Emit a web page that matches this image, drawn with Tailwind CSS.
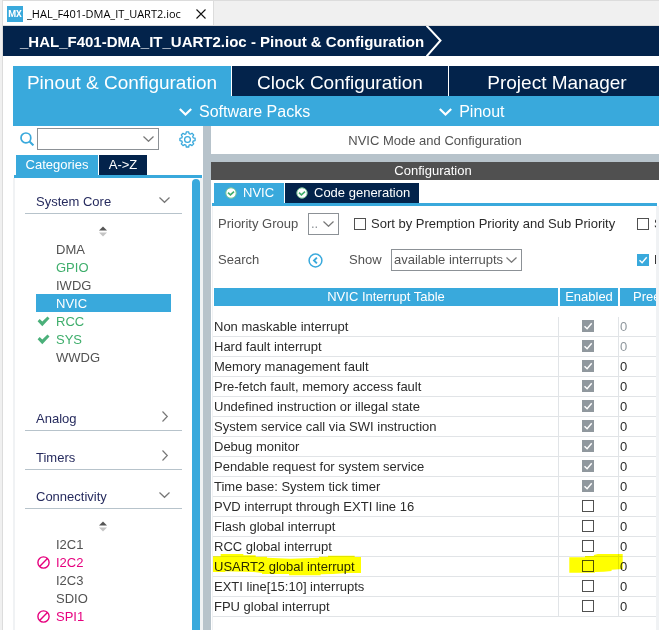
<!DOCTYPE html>
<html lang="en">
<head>
    <meta charset="UTF-8">
    <meta name="viewport" content="width=device-width, initial-scale=1.0">
    <title>_HAL_F401-DMA_IT_UART2.ioc</title>
    <script src="https://cdn.jsdelivr.net/npm/@tailwindcss/browser@4"></script>
</head>
<body class="flex h-screen flex-col overflow-hidden border-l-2 border-[#f0f0f0] bg-white font-['Liberation_Sans',Arial,sans-serif] text-[13px] leading-[18px] text-[#525252]">

    <!-- EDITOR TAB -->
    <div class="flex h-[26px] shrink-0 border-t border-b border-[#dcdcdc] bg-[#f0f0f0]">
        <div class="flex w-[212px] items-center border-x border-[#dcdcdc] bg-white pl-1 pt-px text-[11px] text-black">
            <span class="flex size-4 shrink-0 items-center justify-center bg-[#39a9dc] font-['Roboto',sans-serif] text-[9px] font-bold text-white">MX</span>
            <span class="ml-1 flex-1 whitespace-nowrap font-['Open_Sans','Noto_Sans',sans-serif]">_HAL_F401-DMA_IT_UART2.ioc</span>
            <button aria-label="Close" class="mr-[7px]">
                <svg class="size-[10px]" viewBox="0 0 10 10" fill="none" stroke="#111" stroke-width="1.1"><path d="M.5 .5l9 9M9.5 .5l-9 9"/></svg>
            </button>
        </div>
    </div>

    <div class="flex min-h-0 flex-1 flex-col border-l border-[#dcdcdc]">
        <!-- BREADCRUMB -->
        <div class="flex h-[30px] shrink-0 items-center bg-[#03234b] pl-[17px] text-[15px] font-bold text-white">
            <h1 class="whitespace-nowrap pt-px">_HAL_F401-DMA_IT_UART2.ioc - Pinout &amp; Configuration</h1>
            <svg class="ml-[2px] h-[30px] w-4" viewBox="0 0 16 30" fill="none" stroke="#fff" stroke-width="2"><path d="M0 -1L14.500 14.500L0 31"/></svg>
        </div>

        <div class="mt-[10px] flex min-h-0 flex-1 flex-col pl-[10px]">
            <!-- MAIN TABS -->
            <nav class="flex h-[30px] shrink-0 gap-px overflow-hidden text-[19px] text-white">
                <button class="w-[218px] shrink-0 whitespace-nowrap bg-[#39a9dc] pt-1">Pinout &amp; Configuration</button>
                <button class="w-[216px] shrink-0 whitespace-nowrap bg-[#03234b] pt-1">Clock Configuration</button>
                <button class="min-w-[216px] flex-1 whitespace-nowrap bg-[#03234b] pt-1">Project Manager</button>
            </nav>
            <div class="flex h-[30px] shrink-0 items-center gap-[129px] bg-[#39a9dc] pl-[166px] text-[16px] text-white">
                <button class="flex items-center gap-[7px] whitespace-nowrap pt-[2px]">
                    <svg class="h-2 w-[13px]" viewBox="0 0 13 8" fill="none" stroke="#fff" stroke-width="2.200"><path d="M.8 1L6.500 6.500L12.200 1"/></svg>
                    Software Packs
                </button>
                <button class="flex items-center gap-[7px] whitespace-nowrap pt-[2px]">
                    <svg class="h-2 w-[13px]" viewBox="0 0 13 8" fill="none" stroke="#fff" stroke-width="2.200"><path d="M.8 1L6.500 6.500L12.200 1"/></svg>
                    Pinout
                </button>
            </div>

            <div class="flex min-h-0 flex-1">
                <!-- LEFT: peripherals -->
                <aside class="flex w-[190px] shrink-0 flex-col">
                    <div class="mt-[2px] flex h-[22px] shrink-0 items-center pl-[7px] pr-[7px]">
                        <svg class="size-[14px]" viewBox="0 0 14 14" fill="none" stroke="#39a9dc" stroke-width="1.700"><circle cx="5.900" cy="5.900" r="4.900"/><path d="M9.500 9.500L13.400 13.400" stroke-width="2"/></svg>
                        <label class="relative ml-[3px]">
                            <select aria-label="Search peripheral" class="h-[22px] w-[122px] appearance-none border border-[#8c9196] bg-white"></select>
                            <svg class="pointer-events-none absolute right-[5px] top-2 h-[6px] w-[11px]" viewBox="0 0 11 6" fill="none" stroke="#777" stroke-width="1.200"><path d="M.5 .5L5.500 5.300L10.500 .5"/></svg>
                        </label>
                        <button aria-label="Settings" class="ml-auto">
                            <svg class="size-[17px]" viewBox="0 0 17 17" fill="none" stroke="#39a9dc" stroke-width="1.300" stroke-linejoin="round"><path d="M7.300 .8h2.400l.4 1.900 1.300.5 1.600-1 1.700 1.700-1 1.600.5 1.300 1.900.4v2.400l-1.900.4-.5 1.300 1 1.600-1.700 1.700-1.600-1-1.300.5-.4 1.900H7.300l-.4-1.900-1.300-.5-1.600 1-1.700-1.700 1-1.600-.5-1.300-1.900-.4V7.300l1.900-.4.5-1.300-1-1.600L4 2.300l1.600 1 1.300-.5z"/><circle cx="8.500" cy="8.500" r="2.900"/></svg>
                        </button>
                    </div>
                    <div class="mt-[5px] flex h-5 shrink-0 gap-px pl-[3px] text-white">
                        <button class="w-[82px] bg-[#39a9dc]">Categories</button>
                        <button class="w-12 bg-[#03234b]">A-&gt;Z</button>
                    </div>
                    <div class="ml-px mr-px h-[3px] shrink-0 bg-[#39a9dc]"></div>
                    <div class="flex min-h-0 flex-1 border-l-2 border-[#f0f2f4]">
                        <div id="tree" class="flex min-w-0 flex-1 flex-col gap-[3px] overflow-hidden pl-[10px] pr-[10px]"></div>
                        <div class="mt-px w-2 rounded-t-sm bg-[#39a9dc]"></div>
                        <div class="w-[3px] bg-[#f0f2f4]"></div>
                    </div>
                </aside>

                <div class="w-2 shrink-0 bg-[#b7c3cb]"></div>

                <!-- RIGHT: configuration -->
                <main class="flex min-w-0 flex-1 flex-col">
                    <h2 class="h-7 shrink-0 pt-[6px] text-center">NVIC Mode and Configuration</h2>
                    <div class="h-2 shrink-0 bg-[#b7c3cb]"></div>
                    <h3 class="h-[18px] shrink-0 bg-[#505050] pr-1 text-center text-white">Configuration</h3>
                    <div class="mt-[3px] flex h-5 shrink-0 gap-px pl-[3px] text-white">
                        <button class="flex w-[70px] items-center gap-[6px] bg-[#39a9dc] pl-[11px]">
                            <svg class="size-3" viewBox="0 0 12 12" fill="none"><circle cx="6" cy="6" r="5.200" fill="#fff" stroke="#7cc79a" stroke-width="1"/><path d="M3 5.600l2.400 2.300 3.600-3.300" stroke="#3fae6c" stroke-width="1.600"/></svg>
                            NVIC
                        </button>
                        <button class="flex w-[134px] items-center gap-[6px] whitespace-nowrap bg-[#03234b] pl-[11px]">
                            <svg class="size-3" viewBox="0 0 12 12" fill="none"><circle cx="6" cy="6" r="5.200" fill="#fff" stroke="#7cc79a" stroke-width="1"/><path d="M3 5.600l2.400 2.300 3.600-3.300" stroke="#3fae6c" stroke-width="1.600"/></svg>
                            Code generation
                        </button>
                    </div>
                    <div class="ml-px mr-[2px] h-[3px] shrink-0 bg-[#39a9dc]"></div>

                    <div class="ml-px flex min-h-0 flex-1 flex-col overflow-hidden border-l border-r-3 border-[#f0f2f4]">
                        <div class="mt-[7px] flex h-[22px] shrink-0 items-center overflow-hidden whitespace-nowrap pl-[5px]">
                            <label for="group" class="w-[90px] shrink-0">Priority Group</label>
                            <div class="relative shrink-0">
                                <select id="group" class="h-[22px] w-[31px] appearance-none border border-[#8c9196] bg-white pl-[2px] text-[#8c9196]"><option>..</option></select>
                                <svg class="pointer-events-none absolute right-[5px] top-2 h-[6px] w-[11px]" viewBox="0 0 11 6" fill="none" stroke="#777" stroke-width="1.200"><path d="M.5 .5L5.500 5.300L10.500 .5"/></svg>
                            </div>
                            <label class="ml-[15px] flex w-[283px] shrink-0 items-center gap-[5px] text-[#2b2b2b]">
                                <input type="checkbox" class="size-3 appearance-none border border-[#505050]">
                                Sort by Premption Priority and Sub Priority
                            </label>
                            <label class="flex shrink-0 items-center gap-[5px] text-[#2b2b2b]">
                                <input type="checkbox" class="size-3 appearance-none border border-[#505050]">
                                S
                            </label>
                        </div>
                        <div class="mt-[14px] flex h-[22px] shrink-0 items-center overflow-hidden whitespace-nowrap pl-[5px]">
                            <span class="w-[90px] shrink-0">Search</span>
                            <button aria-label="Previous" class="mr-[26px] shrink-0">
                                <svg class="size-[15px]" viewBox="0 0 15 15" fill="none" stroke="#39a9dc"><circle cx="7.500" cy="7.500" r="6.400" stroke-width="1.500"/><path d="M8.900 4.600L6 7.500l2.900 2.900" stroke-width="1.900"/></svg>
                            </button>
                            <label for="show" class="w-[42px] shrink-0">Show</label>
                            <div class="relative w-[246px] shrink-0">
                                <select id="show" class="h-[22px] w-[131px] appearance-none border border-[#8c9196] bg-white pl-[2px]"><option>available interrupts</option></select>
                                <svg class="pointer-events-none absolute left-[115px] top-2 h-[6px] w-[11px]" viewBox="0 0 11 6" fill="none" stroke="#777" stroke-width="1.200"><path d="M.5 .5L5.500 5.300L10.500 .5"/></svg>
                            </div>
                            <label class="flex shrink-0 items-center gap-[5px] text-[#2b2b2b]">
                                <span class="grid">
                                    <input type="checkbox" checked class="col-start-1 row-start-1 size-3 appearance-none bg-[#39a9dc]">
                                    <svg class="pointer-events-none col-start-1 row-start-1 size-3" viewBox="0 0 12 12" fill="none" stroke="#fff" stroke-width="1.400"><path d="M2.500 6.200l2.600 2.500 4.600-5.500"/></svg>
                                </span>
                                F
                            </label>
                        </div>

                        <table class="mt-[17px] w-full table-fixed border-separate border-spacing-0 text-[#2b2b2b]">
                            <colgroup>
                                <col>
                                <col class="w-[60px]">
                                <col class="w-[37px]">
                            </colgroup>
                            <thead class="text-white">
                                <tr>
                                    <th class="h-[18px] border-x border-white bg-[#39a9dc] p-0 font-normal">NVIC Interrupt Table</th>
                                    <th class="h-[18px] border-x border-white bg-[#39a9dc] p-0 font-normal">Enabled</th>
                                    <th class="h-[18px] overflow-hidden whitespace-nowrap border-l border-white bg-[#39a9dc] p-0 pl-[13px] text-left font-normal">Pree</th>
                                </tr>
                                <tr><td colspan="3" class="h-[11px] p-0"></td></tr>
                            </thead>
                            <tbody id="interrupts"></tbody>
                        </table>
                    </div>
                </main>
            </div>
        </div>
    </div>

    <script>
        const groups = [
            { name: 'System Core', items: [['DMA'], ['GPIO', 'used'], ['IWDG'], ['NVIC', 'selected'], ['RCC', 'ok'], ['SYS', 'ok'], ['WWDG']] },
            { name: 'Analog' },
            { name: 'Timers' },
            { name: 'Connectivity', items: [['I2C1'], ['I2C2', 'blocked'], ['I2C3'], ['SDIO'], ['SPI1', 'blocked'], ['SPI2']] },
        ];

        const stateClass = {
            used: 'text-[#3fae6c]',
            ok: 'text-[#3fae6c]',
            selected: 'bg-[#39a9dc] text-white',
            blocked: 'text-[#e6007e]',
        };

        const stateIcon = {
            ok: '<svg class="h-[11px] w-[13px]" viewBox="0 0 13 11"><path fill="#4bb07a" d="M.6 5.200L2.700 3l2.600 2.600L10.500 .6l2 2L5.300 10.200z"/></svg>',
            blocked: '<svg class="size-[13px]" viewBox="0 0 13 13" fill="none" stroke="#e6007e" stroke-width="1.400"><circle cx="6.500" cy="6.500" r="5.600"/><path d="M2.600 10.400l7.800-7.800"/></svg>',
        };

        // one category, with its items when open
        function groupHtml(group) {
            const arrow = group.items ? 'M.5 3.500L5.500 8.300L10.500 3.500' : 'M3.500 .5L8.300 5.500L3.500 10.500';
            const rows = (group.items || []).map(([name, state]) => `
                <li><a href="#" class="flex h-[18px] items-center pt-px ${stateClass[state] || ''}">
                    <span class="w-5 pl-px">${stateIcon[state] || ''}</span>${name}
                </a></li>`).join('');
            return `
                <section class="shrink-0">
                    <button class="flex h-9 w-full items-end justify-between border-b border-[#b7c3cb] pb-[2px] pl-[11px] pr-3 text-[#262b5e]">
                        <span>${group.name}</span>
                        <svg class="mb-[6px] size-[11px]" viewBox="0 0 11 11" fill="none" stroke="#777" stroke-width="1.200"><path d="${arrow}"/></svg>
                    </button>
                    ${group.items ? `
                    <div class="flex h-[26px] items-center justify-center pr-[2px] pt-2">
                        <svg class="h-[11px] w-2" viewBox="0 0 8 11"><path fill="#555" d="M0 4.500L4 .5l4 4z"/><path fill="#c4c4c4" d="M0 6.500h8l-4 4z"/></svg>
                    </div>
                    <ul class="pb-[26px] pl-[11px] pr-[11px]">${rows}</ul>` : ''}
                </section>`;
        }

        document.getElementById('tree').innerHTML = groups.map(groupHtml).join('');

        // name, enabled, locked
        const interrupts = [
            ['Non maskable interrupt', true, true],
            ['Hard fault interrupt', true, true],
            ['Memory management fault', true],
            ['Pre-fetch fault, memory access fault', true],
            ['Undefined instruction or illegal state', true],
            ['System service call via SWI instruction', true],
            ['Debug monitor', true],
            ['Pendable request for system service', true],
            ['Time base: System tick timer', true],
            ['PVD interrupt through EXTI line 16', false],
            ['Flash global interrupt', false],
            ['RCC global interrupt', false],
            ['USART2 global interrupt', false],
            ['EXTI line[15:10] interrupts', false],
            ['FPU global interrupt', false],
        ];

        const nameMarker = `<svg class="pointer-events-none absolute -top-[3px] left-0 h-[22px] w-[148px] mix-blend-multiply" viewBox="40 222 444 66" fill="#ff0"><path d="M40 229H63V222H131V226H168V230H202V233L273 236L358 233V230H385V227H465V231H484V279H440L400 282L363 283V286H268V282H187V279L160 276L77 274V276H40z"/></svg>`;
        const boxMarker = `<svg class="pointer-events-none absolute -top-[3px] left-[10px] z-10 h-[19px] w-[54px] mix-blend-multiply" viewBox="207 222 163 58" fill="#ff0"><path d="M207 232H255V228H282V225L294 222H370V268L336 270V274L312 276L285 277V279H207z"/></svg>`;

        document.getElementById('interrupts').innerHTML = interrupts.map(([name, on, locked]) => {
            const marked = name.startsWith('USART2');
            return `
                <tr>
                    <td class="relative h-5 whitespace-nowrap border-r border-b border-[#e1e4e7] p-0 pl-px">${name}${marked ? nameMarker : ''}</td>
                    <td class="relative h-5 border-r border-b border-[#e1e4e7] p-0 pb-px pr-px">
                        <span class="mx-auto grid w-3">
                            <input type="checkbox" aria-label="${name}" ${on ? 'checked disabled' : ''} class="col-start-1 row-start-1 size-3 appearance-none border border-[#505050] checked:border-[#90989e] checked:bg-[#90989e]">
                            ${on ? '<svg class="pointer-events-none z-10 col-start-1 row-start-1 size-3" viewBox="0 0 12 12" fill="none" stroke="#fff" stroke-width="1.400"><path d="M2.500 6.200l2.600 2.500 4.600-5.500"/></svg>' : ''}
                        </span>
                        ${marked ? boxMarker : ''}
                    </td>
                    <td class="h-5 border-b border-[#e1e4e7] p-0 pl-px ${locked ? 'text-[#90989e]' : ''}">0</td>
                </tr>`;
        }).join('');
    </script>
</body>
</html>
